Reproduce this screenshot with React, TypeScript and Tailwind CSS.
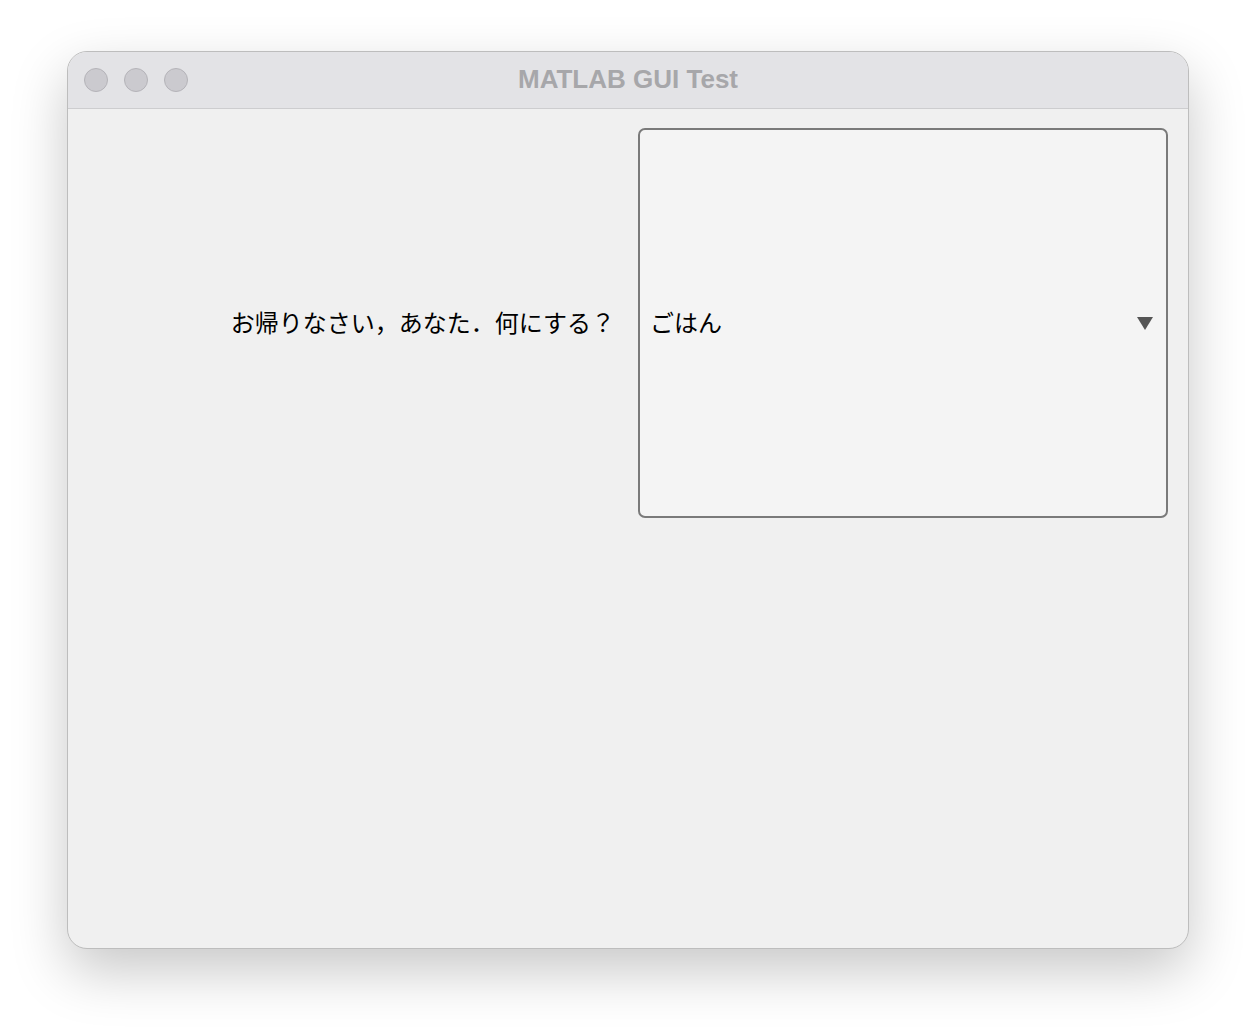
import React from "react";

export default function App() {
  return (
    <div className="min-h-[1032px] w-[1256px] bg-white pt-[51px] pl-[67px]">
      <div className="flex h-[898px] w-[1122px] flex-col overflow-hidden rounded-[20px] border border-[#bdbdbd] bg-[#f0f0f0] shadow-[0_22px_55px_rgba(0,0,0,0.22)]">
        <div className="relative flex h-[57px] shrink-0 items-center border-b border-[#cdcdcf] bg-[#e3e3e6]">
          <div className="flex gap-4 pl-[16px]">
            <div className="h-6 w-6 rounded-full border border-[#b4b3b8] bg-[#cbcacf]" />
            <div className="h-6 w-6 rounded-full border border-[#b4b3b8] bg-[#cbcacf]" />
            <div className="h-6 w-6 rounded-full border border-[#b4b3b8] bg-[#cbcacf]" />
          </div>
          <div
            className="absolute inset-0 flex items-center justify-center text-[26px] font-bold text-[#a7a7aa]"
            style={{ fontFamily: '"Liberation Sans", Arial, sans-serif' }}
          >
            <span className="-mt-[1px]">MATLAB GUI Test</span>
          </div>
        </div>
        <div
          className="flex flex-1 items-start gap-[14px] pt-[19px] pr-[20px]"
          style={{ fontFamily: '"Noto Sans CJK JP", "Noto Sans", sans-serif' }}
        >
          <div className="flex h-[390px] flex-1 items-center justify-end pr-[9px] text-[24px] leading-none text-black">
            <span className="-mt-[3px]">お帰りなさい，あなた．何にする？</span>
          </div>
          <div className="flex h-[390px] w-[530px] items-center justify-between rounded-[7px] border-2 border-[#7a7a7a] bg-[#f4f4f4] pl-[10px] pr-[13px]">
            <span className="-mt-[3px] text-[24px] leading-none text-black">ごはん</span>
            <svg width="16" height="13" viewBox="0 0 16 13">
              <polygon points="0,0 16,0 8,13" fill="#555555" />
            </svg>
          </div>
        </div>
      </div>
    </div>
  );
}
